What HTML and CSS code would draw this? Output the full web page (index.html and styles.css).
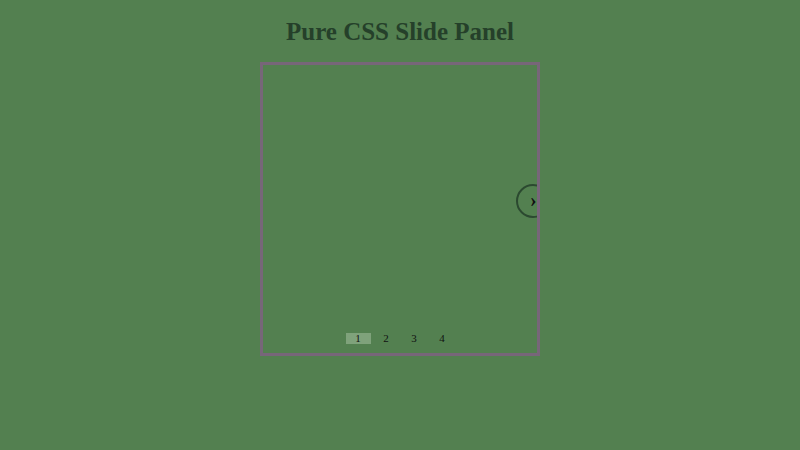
FILE: index.html
```html
<!DOCTYPE html>
<html lang="en">

<head>
  <meta charset="UTF-8">
  <meta name="viewport" content="width=device-width, initial-scale=1.0">
  <title>Pure CSS Slide Panel</title>
  <link rel="stylesheet" href="styles.css">
</head>

<body>
  <h1>Pure CSS Slide Panel</h1>

  <div class="slider">
    <div class="slides"></div>

    <label class="arrow next">&rsaquo;</label>

    <ul class="pager">
      <li class="active">1</li>
      <li>2</li>
      <li>3</li>
      <li>4</li>
    </ul>
  </div>
</body>

</html>
```

FILE: styles.css
```css
:root {
  --bg: #538050;
  --frame: #776679;
  --dark: #25402a;
  --current: #7fa27b;
}

body {
  margin: 0;
  background: var(--bg);
  font-family: "Liberation Serif", "Times New Roman", serif;
}

h1 {
  margin: 17px 0 15px;
  line-height: 30px;
  font-size: 25px;
  text-align: center;
  color: var(--dark);
}

.slider {
  position: relative;
  width: 274px;
  height: 288px;
  margin: 0 auto;
  border: 3px solid var(--frame);
  overflow: hidden;
  display: flex;
  flex-direction: column;
}

.slides {
  flex: 1;
}

/* round "next" button, half hidden past the frame */
.arrow {
  position: absolute;
  top: 119px;
  left: 253px;
  width: 30px;
  height: 30px;
  border: 2px solid rgba(37, 64, 42, 0.85);
  border-radius: 50%;
  font-size: 20px;
  font-weight: bold;
  line-height: 28px;
  text-indent: 12px;
  color: #111;
  cursor: pointer;
}

.pager {
  list-style: none;
  margin: 0 0 9px;
  padding: 0;
  display: flex;
  justify-content: center;
  gap: 3px;
}

.pager li {
  width: 25px;
  height: 11px;
  line-height: 11px;
  font-size: 11px;
  text-align: center;
  color: #111;
}

.pager .active {
  background: var(--current);
}
```
